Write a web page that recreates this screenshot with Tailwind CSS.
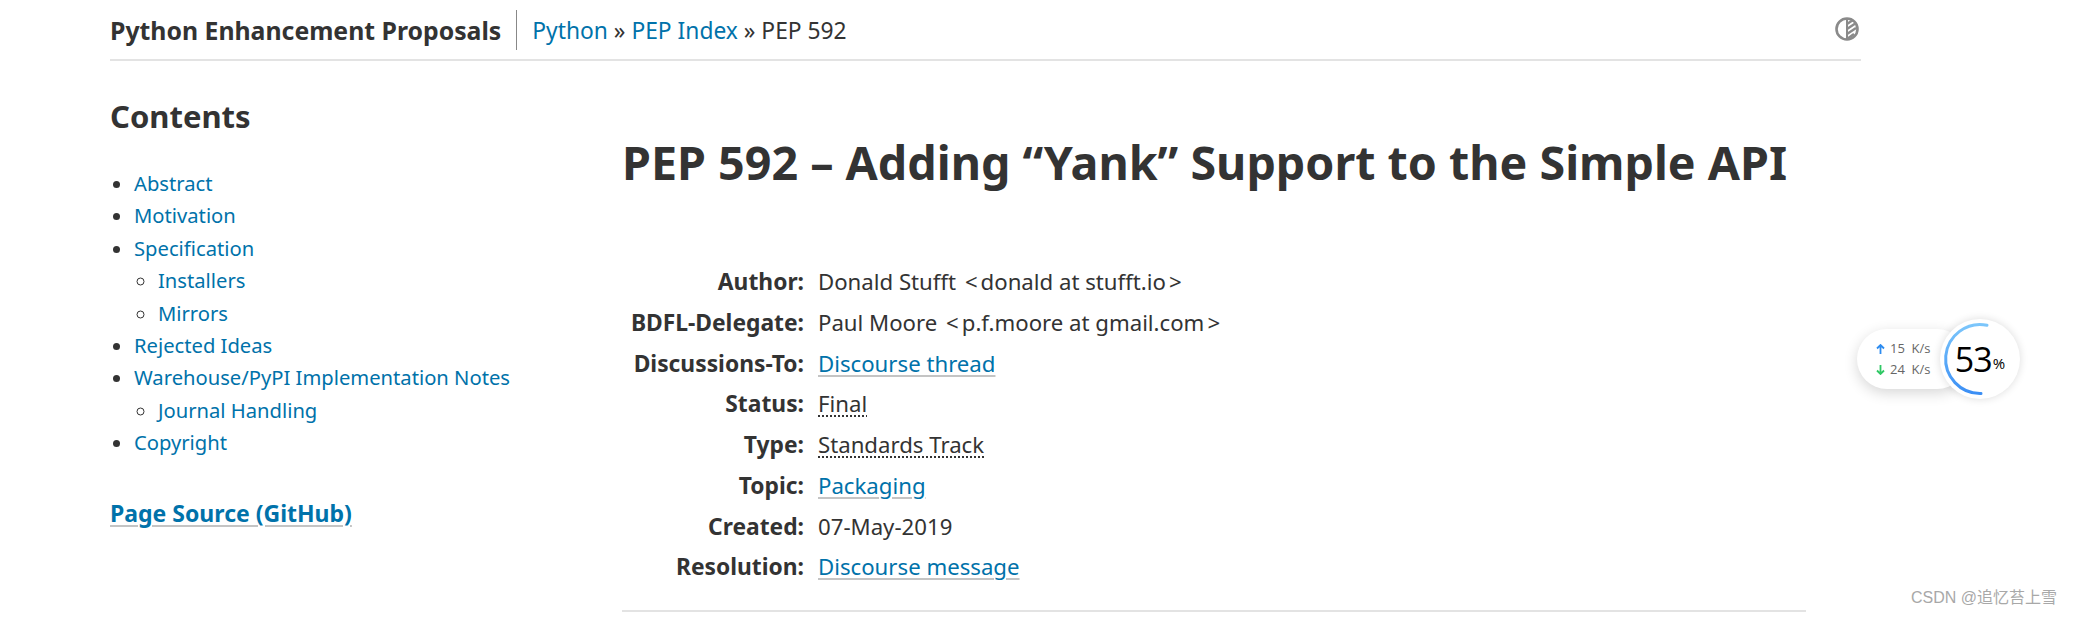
<!DOCTYPE html>
<html lang="en">
<head>
    <meta charset="UTF-8">
    <title>PEP 592</title>
    <script src="https://cdn.jsdelivr.net/npm/@tailwindcss/browser@4"></script>
</head>
<body class="bg-white text-[#333] font-['Noto_Sans','Open_Sans',sans-serif] text-[22.2px] overflow-hidden">
<div class="relative h-[617px] w-[2097px] overflow-hidden">

    <!-- Header -->
    <div class="mx-[110px] w-[1751px] h-[61px] border-b-2 border-[#e3e3e3] flex items-start pt-[10px] relative">
        <span class="font-bold text-[24.8px] leading-[41px] pr-[15px] border-r border-[#888] h-[40px] whitespace-nowrap">Python Enhancement Proposals</span>
        <span class="pl-[15px] leading-[41px] text-[22.8px] whitespace-nowrap"><a class="text-[#0072aa]">Python</a> » <a class="text-[#0072aa]">PEP Index</a> » PEP 592</span>
        <svg class="absolute right-[1px] top-[16px]" width="26" height="26" viewBox="0 0 26 26" fill="none">
            <circle cx="13" cy="13" r="10.5" stroke="#8a8a8a" stroke-width="2.6"/>
            <path d="M13 3v20" stroke="#8a8a8a" stroke-width="2"/>
            <path d="M13 8l6-4M13 13l9-6M13 18l9-6M13 23l7-5" stroke="#8a8a8a" stroke-width="2.4"/>
        </svg>
    </div>

    <div class="flex mx-[110px]">
        <!-- Sidebar -->
        <aside class="w-[512px] shrink-0 pt-[30px]">
            <h2 class="font-bold text-[31px] leading-[50px]">Contents</h2>
            <ul class="mt-[26px] list-disc pl-[24px] text-[20.2px] text-[#0072aa] leading-[32.4px] marker:text-[#333]">
                <li>Abstract</li>
                <li>Motivation</li>
                <li>Specification
                    <ul class="list-[circle] pl-[24px]">
                        <li>Installers</li>
                        <li>Mirrors</li>
                    </ul>
                </li>
                <li>Rejected Ideas</li>
                <li>Warehouse/PyPI Implementation Notes
                    <ul class="list-[circle] pl-[24px]">
                        <li>Journal Handling</li>
                    </ul>
                </li>
                <li>Copyright</li>
            </ul>
            <a class="block mt-[36px] font-bold text-[23px] text-[#0072aa] leading-[36px] underline decoration-2 decoration-[#c4c4c4] underline-offset-[3px]">Page Source (GitHub)</a>
        </aside>

        <!-- Main -->
        <main class="w-[1184px]">
            <h1 class="font-bold text-[46.6px] leading-[60px] mt-[71px] whitespace-nowrap">PEP 592 – Adding “Yank” Support to the Simple API</h1>
            <dl class="mt-[70px] grid grid-cols-[182px_1fr] gap-x-[14px] leading-[40.75px]">
                <dt class="font-bold text-[22.8px] text-right whitespace-nowrap">Author:</dt><dd>Donald Stufft <span class="px-[3px]">&lt;</span>donald at stufft.io<span class="px-[3px]">&gt;</span></dd>
                <dt class="font-bold text-[22.8px] text-right whitespace-nowrap">BDFL-Delegate:</dt><dd>Paul Moore <span class="px-[3px]">&lt;</span>p.f.moore at gmail.com<span class="px-[3px]">&gt;</span></dd>
                <dt class="font-bold text-[22.8px] text-right whitespace-nowrap">Discussions-To:</dt><dd><a class="text-[#0072aa] underline decoration-2 decoration-[#c4c4c4] underline-offset-[3px]">Discourse thread</a></dd>
                <dt class="font-bold text-[22.8px] text-right whitespace-nowrap">Status:</dt><dd><span class="underline decoration-dotted decoration-2 underline-offset-[3px]">Final</span></dd>
                <dt class="font-bold text-[22.8px] text-right whitespace-nowrap">Type:</dt><dd><span class="underline decoration-dotted decoration-2 underline-offset-[3px]">Standards Track</span></dd>
                <dt class="font-bold text-[22.8px] text-right whitespace-nowrap">Topic:</dt><dd><a class="text-[#0072aa] underline decoration-2 decoration-[#c4c4c4] underline-offset-[3px]">Packaging</a></dd>
                <dt class="font-bold text-[22.8px] text-right whitespace-nowrap">Created:</dt><dd>07-May-2019</dd>
                <dt class="font-bold text-[22.8px] text-right whitespace-nowrap">Resolution:</dt><dd><a class="text-[#0072aa] underline decoration-2 decoration-[#c4c4c4] underline-offset-[3px]">Discourse message</a></dd>
            </dl>
            <hr class="mt-[22px] border-t-2 border-[#e3e3e3]">
        </main>
    </div>

    <!-- Network widget -->
    <div class="absolute left-[1857px] top-[329px] w-[110px] h-[60px] rounded-full bg-white shadow-[0_4px_14px_rgba(0,0,0,0.16)] pl-[19px] pt-[9px] text-[13px] leading-[21px] text-[#666] font-['Open_Sans',sans-serif]">
        <div class="flex items-center gap-[5px]">
            <svg width="9" height="10" viewBox="0 0 9 10" fill="none"><path d="M4.5 10V1M1 4.5l3.5-3.5L8 4.5" stroke="#2d8cf0" stroke-width="1.8"/></svg>
            <span class="whitespace-pre">15  K/s</span>
        </div>
        <div class="flex items-center gap-[5px]">
            <svg width="9" height="10" viewBox="0 0 9 10" fill="none"><path d="M4.5 0v9M1 5.5L4.5 9 8 5.5" stroke="#2fc864" stroke-width="1.8"/></svg>
            <span class="whitespace-pre">24  K/s</span>
        </div>
    </div>
    <div class="absolute left-[1940px] top-[319px] w-[80px] h-[80px] rounded-full bg-white shadow-[0_0_8px_rgba(0,0,0,0.14)] flex items-center justify-center text-black font-['Open_Sans',sans-serif]">
        <svg class="absolute left-0 top-0" width="80" height="80" viewBox="0 0 80 80" fill="none">
            <defs>
                <linearGradient id="arc" x1="0" y1="0" x2="0" y2="1">
                    <stop offset="0" stop-color="#7cc6fb"/>
                    <stop offset="1" stop-color="#3b8ff5"/>
                </linearGradient>
            </defs>
            <path d="M47 6.2A34.5 34.5 0 1 0 41 74.5" stroke="url(#arc)" stroke-width="3" stroke-linecap="round"/>
        </svg>
        <span class="text-[34px] leading-none tracking-[-1px]">53</span><span class="text-[15px] mt-[9px] ml-[1px]">%</span>
    </div>

    <!-- Watermark -->
    <div class="absolute left-[1911px] top-[587px] text-[16px] leading-[22px] text-[#a8a8a8] font-['Liberation_Sans','Noto_Sans_CJK_SC',sans-serif] whitespace-nowrap">CSDN @追忆苔上雪</div>
</div>
</body>
</html>
